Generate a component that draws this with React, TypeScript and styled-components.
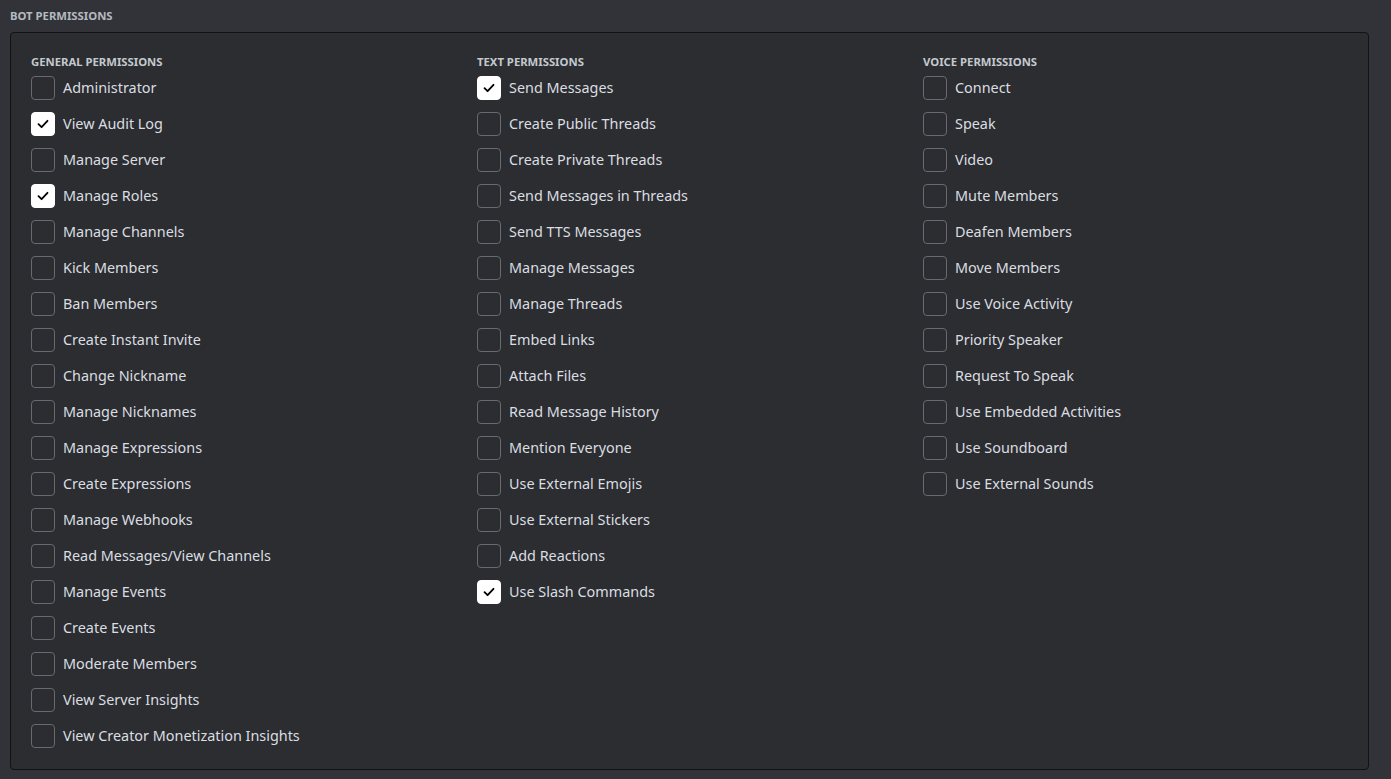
import React from "react";
import styled, { createGlobalStyle } from "styled-components";

const Global = createGlobalStyle`
  html, body { margin: 0; padding: 0; background: #313338; }
  body { font-family: "Noto Sans", "Open Sans", sans-serif; }
`;

const Page = styled.div`
  padding: 8px 22px 10px 10px;
  background: #313338;
  min-height: 779px;
  box-sizing: border-box;
`;

const Title = styled.h2`
  margin: 0 0 8px 0;
  font-size: 11.3px;
  line-height: 16px;
  font-weight: 700;
  color: #b5bac1;
  text-transform: uppercase;
`;

const Panel = styled.div`
  background: #2b2d31;
  border: 1px solid #111214;
  border-radius: 4px;
  padding: 20px 20px 21px;
  display: grid;
  grid-template-columns: 446px 446px 1fr;
`;

const Column = styled.div`
  display: flex;
  flex-direction: column;
`;

const Heading = styled.h3`
  margin: 0 0 6px 0;
  padding-top: 1px;
  font-size: 11.3px;
  line-height: 16px;
  font-weight: 700;
  color: #c4c9ce;
  text-transform: uppercase;
`;

const List = styled.div`
  display: flex;
  flex-direction: column;
  gap: 12px;
`;

const Row = styled.label`
  display: flex;
  align-items: center;
  gap: 8px;
  height: 24px;
  cursor: pointer;
`;

const Box = styled.span<{ $checked: boolean }>`
  width: 24px;
  height: 24px;
  box-sizing: border-box;
  border-radius: 4px;
  border: 1px solid ${(p) => (p.$checked ? "#ffffff" : "#686a73")};
  background: ${(p) => (p.$checked ? "#ffffff" : "transparent")};
  display: flex;
  align-items: center;
  justify-content: center;
  flex-shrink: 0;
`;

const Label = styled.span`
  font-size: 14.4px;
  line-height: 20px;
  color: #dbdee1;
  white-space: nowrap;
`;

const Check = () => (
  <svg width="14" height="14" viewBox="0 0 14 14" fill="none">
    <path d="M2.5 7.2 L5.6 10.2 L11.5 3.8" stroke="#000" strokeWidth="1.8" strokeLinecap="round" strokeLinejoin="round" />
  </svg>
);

type Perm = [string, boolean];

const columns: { title: string; items: Perm[] }[] = [
  {
    title: "General Permissions",
    items: [
      ["Administrator", false],
      ["View Audit Log", true],
      ["Manage Server", false],
      ["Manage Roles", true],
      ["Manage Channels", false],
      ["Kick Members", false],
      ["Ban Members", false],
      ["Create Instant Invite", false],
      ["Change Nickname", false],
      ["Manage Nicknames", false],
      ["Manage Expressions", false],
      ["Create Expressions", false],
      ["Manage Webhooks", false],
      ["Read Messages/View Channels", false],
      ["Manage Events", false],
      ["Create Events", false],
      ["Moderate Members", false],
      ["View Server Insights", false],
      ["View Creator Monetization Insights", false],
    ],
  },
  {
    title: "Text Permissions",
    items: [
      ["Send Messages", true],
      ["Create Public Threads", false],
      ["Create Private Threads", false],
      ["Send Messages in Threads", false],
      ["Send TTS Messages", false],
      ["Manage Messages", false],
      ["Manage Threads", false],
      ["Embed Links", false],
      ["Attach Files", false],
      ["Read Message History", false],
      ["Mention Everyone", false],
      ["Use External Emojis", false],
      ["Use External Stickers", false],
      ["Add Reactions", false],
      ["Use Slash Commands", true],
    ],
  },
  {
    title: "Voice Permissions",
    items: [
      ["Connect", false],
      ["Speak", false],
      ["Video", false],
      ["Mute Members", false],
      ["Deafen Members", false],
      ["Move Members", false],
      ["Use Voice Activity", false],
      ["Priority Speaker", false],
      ["Request To Speak", false],
      ["Use Embedded Activities", false],
      ["Use Soundboard", false],
      ["Use External Sounds", false],
    ],
  },
];

export default function App() {
  return (
    <>
      <Global />
      <Page>
        <Title>Bot Permissions</Title>
        <Panel>
          {columns.map((col) => (
            <Column key={col.title}>
              <Heading>{col.title}</Heading>
              <List>
                {col.items.map(([name, checked]) => (
                  <Row key={name}>
                    <Box $checked={checked}>{checked && <Check />}</Box>
                    <Label>{name}</Label>
                  </Row>
                ))}
              </List>
            </Column>
          ))}
        </Panel>
      </Page>
    </>
  );
}
